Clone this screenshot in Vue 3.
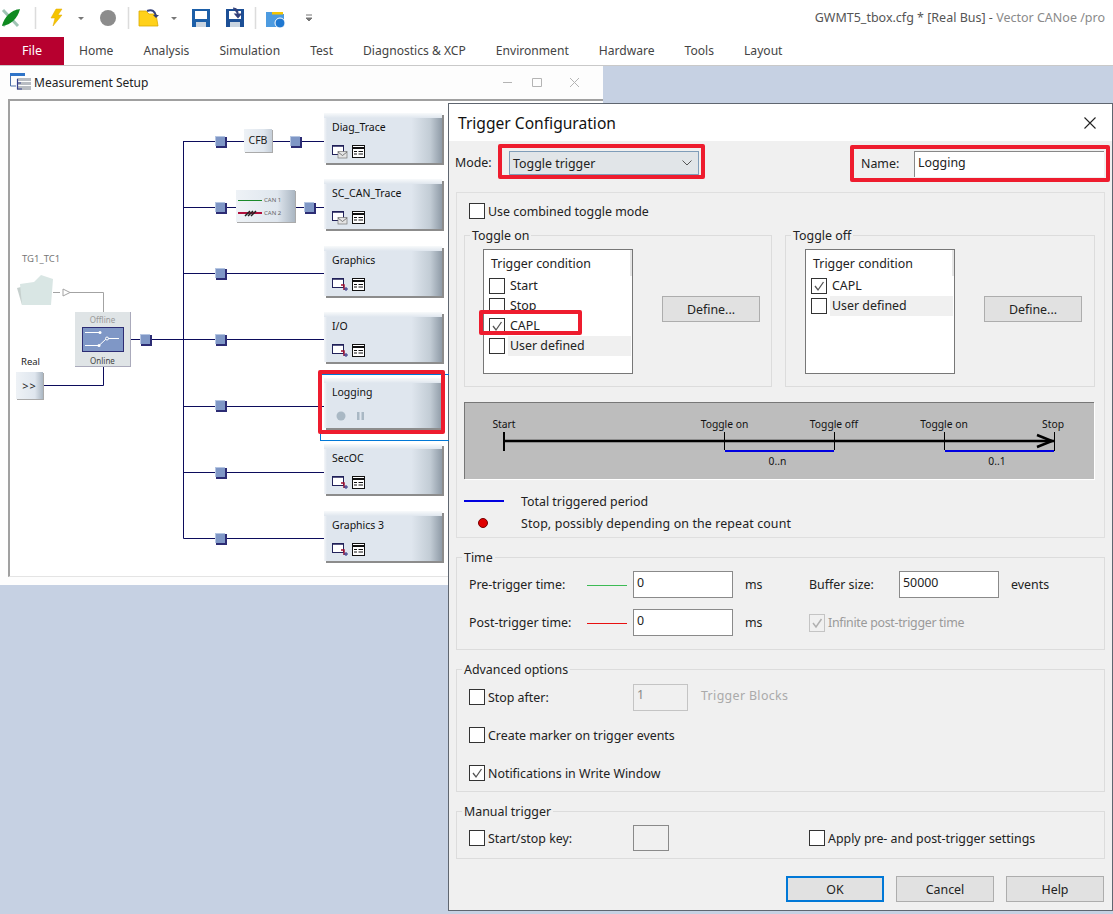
<template>
  <div class="app">
    <!-- quick access toolbar -->
    <div class="qat">
      <svg class="qat-icons" width="330" height="37" viewBox="0 0 330 37">
        <path d="M3 10 L18 26 M18 10 L3 26" stroke="#9fc4b4" stroke-width="3" />
        <path d="M2 26 C4 17 11 10 20 9 C18 18 11 25 2 26Z" fill="#0f8a20" />
        <path d="M35.500 7 V29 M128.500 7 V29 M255.500 7 V29" stroke="#dcdcdc" stroke-width="1.500" />
        <path d="M56 9 L62 9 L58 15 L62 15 L53 26 L55 18 L51 18Z" fill="#f5c400" stroke="#e0a800" stroke-width=".5" />
        <path d="M78 17 H84 L81 20Z M171 17 H177 L174 20Z" fill="#777" />
        <circle cx="108" cy="18" r="8" fill="#8c8c8c" />
        <path d="M139 11 H146 L149 14 H156 L158 26 H139Z" fill="#ffd11a" stroke="#d9a900" stroke-width=".8" />
        <path d="M147 11 C152 9 155 11 156 16" fill="none" stroke="#33407a" stroke-width="2" />
        <path d="M153 15 H159 L156 18Z" fill="#33407a" />
        <path d="M192 9 H210 V27 H192Z" fill="#1c5fa8" />
        <rect x="195" y="11" width="12" height="8" fill="#fff" />
        <rect x="196" y="22" width="10" height="5" fill="#c9d4e0" />
        <path d="M226 9 H244 V27 H226Z" fill="#1c4f96" />
        <rect x="229" y="11" width="12" height="8" fill="#fff" />
        <rect x="230" y="22" width="10" height="5" fill="#c9d4e0" />
        <path d="M233 8 C238 8 238 12 238 15 M235 14 H241 L238 17.500Z" fill="#33407a" stroke="#33407a" stroke-width="1.200" />
        <path d="M266 13 V12 H274 L276 14 H284 V27 H266Z" fill="#4d9be0" />
        <rect x="272" y="12" width="11" height="2.500" fill="#f5c400" />
        <circle cx="280" cy="23" r="5" fill="#1f78d1" stroke="#fff" />
        <path d="M306 15 H312 M306 18 H312 L309 21Z" stroke="#777" fill="#777" />
      </svg>
      <div class="doc-title">GWMT5_tbox.cfg * [Real Bus] - <span>Vector CANoe /pro</span></div>
    </div>

    <!-- ribbon tabs -->
    <div class="ribbon">
      <div class="file-tab">File</div>
      <div class="tabs">
        <span v-for="t in tabs" :key="t">{{ t }}</span>
      </div>
    </div>

    <!-- measurement setup window -->
    <div class="setup">
      <div class="setup-title">
        <svg width="22" height="19" viewBox="0 0 22 19">
          <rect x="0" y="0" width="15" height="3" fill="#2f74c8" />
          <path d="M.5 3 V13 H6" fill="none" stroke="#4a6fa8" />
          <path d="M7 5 H21 V8 H7Z M7 9 H21 V12 H7Z M7 13 H21 V17 H7Z" fill="#b8bcc2" />
          <path d="M7.500 6 V16 H12 M7.500 10 H11" fill="none" stroke="#34408c" stroke-width="1.200" />
        </svg>
        <span>Measurement Setup</span>
        <div class="win-btns">
          <svg width="78" height="14" viewBox="0 0 78 14">
            <path d="M0 7.500 H9 M29.500 3.500 H38.500 V11.500 H29.500Z M67 3 L76 12 M76 3 L67 12" fill="none" stroke="#b4b4b4" />
          </svg>
        </div>
      </div>

      <div class="canvas">
        <svg class="wires" width="593" height="476" viewBox="10 101 593 476">
          <g fill="none" stroke="#0c0c5c">
            <path d="M183.500 141 V538.500" />
            <path v-for="y in rows" :key="y" :d="`M183.500 ${y}.5 H324`" />
            <path d="M131 339.500 H184" />
            <path d="M43 385.500 H103.500 V367" />
          </g>
          <path d="M60 292.500 H53 M70 292.500 H103.500 V312" fill="none" stroke="#a3a3a3" />
          <path d="M63 289 V296 L70 292.500Z" fill="#fff" stroke="#a3a3a3" />
          <path d="M17 288 L33 284 L37 305 L22 305Z" fill="#c6d0ce" />
          <path d="M41 275 L53 279 L51 305 L22 305 L20 284 L34 282Z" fill="#d9e6e4" />
          <g v-for="s in squares" :key="s.x + '-' + s.y">
            <rect :x="s.x + 1" :y="s.y + 1" width="11" height="11" fill="#2c2c74" />
            <rect :x="s.x" :y="s.y" width="10" height="10" fill="#7f97c6" />
            <path :d="`M${s.x} ${s.y}.5 H${s.x + 10} M${s.x}.5 ${s.y} V${s.y + 10}`" stroke="#b6c6e2" />
          </g>
        </svg>

        <div class="tg-label" :style="at(22, 252)">TG1_TC1</div>
        <div class="real-label" :style="at(21, 355)">Real</div>
        <div class="real-box" :style="at(16, 372)">&gt;&gt;</div>

        <div class="switch-box" :style="at(75, 312)">
          <div class="offline">Offline</div>
          <svg width="42" height="25" viewBox="0 0 42 25">
            <rect x=".5" y=".5" width="41" height="24" fill="#7f97c6" stroke="#2c2c74" />
            <path d="M3 5.500 H18 M3 18.500 H17 L24 12 M26 11.500 H37" stroke="#fff" fill="none" />
            <circle cx="18" cy="5.500" r="1.500" fill="#fff" />
            <circle cx="17" cy="18.500" r="1.500" fill="#fff" />
            <circle cx="25" cy="11.500" r="1.500" fill="#7f97c6" stroke="#fff" />
          </svg>
          <div class="online">Online</div>
        </div>

        <div class="cfb" :style="at(244, 129)">CFB</div>
        <div class="can-box" :style="at(236, 190)">
          <svg width="59" height="32" viewBox="0 0 59 32">
            <path d="M2 10.500 H26" stroke="#1a8a2a" />
            <path d="M2 23 H26" stroke="#b0103c" stroke-width="2" />
            <path d="M9 26 L14 21 M12 26 L17 21 M15 26 L20 21" stroke="#222" stroke-width="1.500" />
          </svg>
          <span class="can1">CAN 1</span>
          <span class="can2">CAN 2</span>
        </div>

        <div v-for="n in nodes" :key="n.name" class="node" :style="at(324, n.y)">
          <div class="node-name">{{ n.name }}</div>
          <div class="node-icons">
            <template v-if="n.kind === 'log'">
              <svg width="34" height="12" viewBox="0 0 34 12">
                <circle cx="9" cy="6" r="4.500" fill="#a9b8c4" />
                <path d="M25 2 H27.500 V10 H25Z M29.500 2 H32 V10 H29.500Z" fill="#a9b8c4" />
              </svg>
            </template>
            <template v-else>
              <svg width="36" height="14" viewBox="0 0 36 14">
                <rect x=".5" y=".5" width="11" height="9" fill="#fff" stroke="#22225a" />
                <path d="M0 1 H12" stroke="#22225a" stroke-width="1.500" />
                <template v-if="n.kind === 'trace'">
                  <rect x="6" y="6.500" width="9" height="6.500" fill="#e4e4e4" stroke="#777" stroke-width=".7" />
                  <path d="M6 7 L10.500 10.500 L15 7" fill="none" stroke="#555" stroke-width=".7" />
                </template>
                <template v-else>
                  <path d="M9 7 H12 V12" fill="none" stroke="#a01030" stroke-width="1.500" />
                  <path d="M12 11 H16 M14 9 V13" stroke="#2a2a80" />
                </template>
                <rect x="20.500" y=".5" width="12" height="12" fill="#fff" stroke="#111" />
                <path d="M20 3 H33" stroke="#111" stroke-width="2" />
                <path d="M22 6.500 H25 M26.500 6.500 H31 M22 9 H25 M26.500 9 H31" stroke="#111" />
              </svg>
            </template>
          </div>
        </div>
      </div>
    </div>

    <!-- trigger dialog -->
    <div class="dialog">
      <div class="dlg-title">
        <span>Trigger Configuration</span>
        <svg width="12" height="12" viewBox="0 0 12 12">
          <path d="M.5 .5 L11.500 11.500 M11.500 .5 L.5 11.500" stroke="#222" stroke-width="1.100" />
        </svg>
      </div>

      <div class="mode-row">
        <label class="mode-label">Mode:</label>
        <div class="select">
          <span>Toggle trigger</span>
          <svg width="10" height="6" viewBox="0 0 10 6"><path d="M.5 .5 L5 5 L9.500 .5" fill="none" stroke="#555" /></svg>
        </div>
        <label class="name-label">Name:</label>
        <div class="name-input">Logging</div>
      </div>

      <div class="group main-group">
        <div class="check-row combined">
          <span class="cb"></span><span>Use combined toggle mode</span>
        </div>

        <div class="toggle-row">
          <div class="group toggle-group" v-for="g in toggles" :key="g.title" :class="g.cls">
            <span class="legend">{{ g.title }}</span>
            <div class="cond-list">
              <div class="cond-head">Trigger condition</div>
              <div class="cond-row" v-for="c in g.items" :key="c.label">
                <span class="cb">
                  <svg v-if="c.on" width="14" height="14" viewBox="0 0 14 14"><path d="M3 7 L6 11 L11.500 3" fill="none" stroke="#555" stroke-width="1.300" /></svg>
                </span>
                <span class="cond-text" :class="{ hl: c.hl }">{{ c.label }}</span>
              </div>
            </div>
            <button class="btn define">Define...</button>
          </div>
        </div>

        <div class="timeline">
          <svg width="630" height="77" viewBox="464 402 630 77">
            <path d="M504 441 H1054" stroke="#000" stroke-width="2.500" />
            <path d="M504 432 V451" stroke="#000" stroke-width="2" />
            <path d="M724.500 432 V450 M834.500 432 V450 M944.500 432 V450 M1054.500 432 V451" stroke="#000" />
            <path d="M1037 435 L1052 441 L1037 447" fill="none" stroke="#000" stroke-width="2.500" />
            <path d="M725 451 H834 M945 451 H1054" stroke="#0000e0" stroke-width="2" />
            <g class="tl-text">
              <text x="504" y="428" text-anchor="middle">Start</text>
              <text x="724.500" y="428" text-anchor="middle">Toggle on</text>
              <text x="834" y="428" text-anchor="middle">Toggle off</text>
              <text x="944" y="428" text-anchor="middle">Toggle on</text>
              <text x="1053" y="428" text-anchor="middle">Stop</text>
              <text x="777.500" y="465" text-anchor="middle">0..n</text>
              <text x="997" y="465" text-anchor="middle">0..1</text>
            </g>
          </svg>
        </div>

        <div class="key-grid">
          <span class="key-line"></span><span>Total triggered period</span>
          <span class="key-dot"></span><span class="key-long">Stop, possibly depending on the repeat count</span>
        </div>
      </div>

      <div class="group time-group">
        <span class="legend">Time</span>
        <div class="time-grid">
          <span>Pre-trigger time:</span>
          <span class="tline green"></span>
          <div class="field">0</div>
          <span class="ms">ms</span>
          <span>Buffer size:</span>
          <div class="field">50000</div>
          <span class="ms">events</span>

          <span>Post-trigger time:</span>
          <span class="tline red"></span>
          <div class="field">0</div>
          <span class="ms">ms</span>
          <div class="check-row infinite disabled">
            <span class="cb">
              <svg width="14" height="14" viewBox="0 0 14 14"><path d="M3 7 L6 11 L11.500 3" fill="none" stroke="#b0b0b0" stroke-width="1.500" /></svg>
            </span>
            <span>Infinite post-trigger time</span>
          </div>
        </div>
      </div>

      <div class="group adv-group">
        <span class="legend">Advanced options</span>
        <div class="adv-row">
          <div class="check-row stop-after"><span class="cb"></span><span>Stop after:</span></div>
          <div class="field small off">1</div>
          <span class="muted">Trigger Blocks</span>
        </div>
        <div class="adv-row">
          <div class="check-row"><span class="cb"></span><span>Create marker on trigger events</span></div>
        </div>
        <div class="adv-row">
          <div class="check-row">
            <span class="cb">
              <svg width="14" height="14" viewBox="0 0 14 14"><path d="M3 7 L6 11 L11.500 3" fill="none" stroke="#555" stroke-width="1.300" /></svg>
            </span>
            <span>Notifications in Write Window</span>
          </div>
        </div>
      </div>

      <div class="group manual-group">
        <span class="legend">Manual trigger</span>
        <div class="adv-row manual-row">
          <div class="check-row stop-after"><span class="cb"></span><span>Start/stop key:</span></div>
          <div class="key-field"></div>
          <div class="check-row apply"><span class="cb"></span><span>Apply pre- and post-trigger settings</span></div>
        </div>
      </div>

      <div class="dlg-buttons">
        <button class="btn primary">OK</button>
        <button class="btn">Cancel</button>
        <button class="btn">Help</button>
      </div>
    </div>

    <!-- red annotations drawn on top of the screenshot -->
    <div class="blue-sel"></div>
    <div v-for="(m, i) in marks" :key="i" class="mark" :style="m"></div>
  </div>
</template>

<script setup>
const tabs = ['Home', 'Analysis', 'Simulation', 'Test', 'Diagnostics & XCP', 'Environment', 'Hardware', 'Tools', 'Layout']

const rows = [141, 207, 273, 339, 406, 472, 538]

const squares = [
  { x: 215, y: 136 }, { x: 290, y: 136 },
  { x: 215, y: 202 }, { x: 304, y: 202 },
  { x: 215, y: 268 }, { x: 215, y: 334 },
  { x: 140, y: 334 }, { x: 215, y: 400 },
  { x: 215, y: 467 }, { x: 215, y: 533 },
]

const nodes = [
  { name: 'Diag_Trace', y: 113, kind: 'trace' },
  { name: 'SC_CAN_Trace', y: 179, kind: 'trace' },
  { name: 'Graphics', y: 246, kind: 'graph' },
  { name: 'I/O', y: 312, kind: 'graph' },
  { name: 'Logging', y: 378, kind: 'log' },
  { name: 'SecOC', y: 444, kind: 'graph' },
  { name: 'Graphics 3', y: 511, kind: 'graph' },
]

const toggles = [
  {
    title: 'Toggle on',
    cls: 'on',
    items: [
      { label: 'Start' },
      { label: 'Stop' },
      { label: 'CAPL', on: true },
      { label: 'User defined', hl: true },
    ],
  },
  {
    title: 'Toggle off',
    cls: 'off',
    items: [
      { label: 'CAPL', on: true },
      { label: 'User defined', hl: true },
    ],
  },
]

const box = (x, y, w, h) => ({ left: x + 'px', top: y + 'px', width: w + 'px', height: h + 'px' })

const marks = [
  box(318, 370, 127, 64),
  box(498, 144, 207, 35),
  box(850, 145, 260, 37),
  box(479, 310, 103, 25),
]

// canvas origin sits at 10,101 on the page
const at = (x, y) => ({ left: x - 10 + 'px', top: y - 101 + 'px' })
</script>

<style>
html, body { margin: 0; background: #c6d1e3; }
</style>

<style scoped>
.app {
  position: relative;
  width: 1113px;
  height: 914px;
  overflow: hidden;
  background: #c6d1e3;
  font-family: "Noto Sans", sans-serif;
  font-size: 12.400px;
  color: #222;
}

.qat {
  position: relative;
  height: 37px;
  background: #fff;
}
.qat-icons { display: block; }
.doc-title {
  position: absolute;
  right: 8px;
  top: 9px;
  font-size: 12.500px;
  color: #555;
}
.doc-title span { color: #8a8a8a; }

.ribbon {
  display: flex;
  height: 28px;
  background: #fff;
  border-bottom: 1px solid #c9c9c9;
}
.file-tab {
  width: 64px;
  background: #b7002f;
  color: #fff;
  text-align: center;
  line-height: 28px;
  font-size: 12.500px;
}
.tabs {
  display: flex;
  gap: 30px;
  padding-left: 15px;
  line-height: 28px;
  font-size: 12.100px;
  color: #444;
}

.setup {
  position: absolute;
  left: 0;
  top: 66px;
  width: 603px;
  height: 519px;
  background: #fdfdfd;
}
.setup-title {
  position: relative;
  display: flex;
  align-items: center;
  gap: 2px;
  height: 33px;
  box-sizing: border-box;
  padding: 0 0 1px 10px;
  font-size: 12px;
  color: #222;
}
.win-btns {
  position: absolute;
  left: 503px;
  top: 9px;
  line-height: 0;
}
.canvas {
  position: relative;
  margin-left: 8px;
  width: 595px;
  height: 478px;
  box-sizing: border-box;
  border-left: 2px solid #a0a0a0;
  border-top: 2px solid #a0a0a0;
  border-bottom: 1px solid #e4e4e4;
  background: #fff;
  font-size: 10.500px;
}
.wires { position: absolute; left: 0; top: 0; }

.tg-label { position: absolute; color: #777; font-size: 9.500px; }
.real-label { position: absolute; color: #222; font-size: 9.500px; }
.real-box {
  position: absolute;
  width: 27px;
  height: 27px;
  box-sizing: border-box;
  text-align: center;
  line-height: 27px;
  font-size: 11px;
  letter-spacing: 1px;
  background: linear-gradient(90deg, #eef2f6, #dfe6ee 70%, #aab6c2);
  box-shadow: 1px 1px 0 #aaa;
}
.switch-box {
  position: absolute;
  width: 56px;
  height: 55px;
  box-sizing: border-box;
  background: #dfe4e6;
  border-right: 1px solid #aab;
  border-bottom: 1px solid #aab;
  text-align: center;
  font-size: 8px;
  line-height: 15px;
}
.switch-box svg { display: block; margin: 0 auto; }
.offline { color: #999; }
.online { color: #444; line-height: 17px; }

.cfb {
  position: absolute;
  width: 28px;
  height: 23px;
  box-sizing: border-box;
  text-align: center;
  line-height: 23px;
  font-size: 10.500px;
  background: linear-gradient(90deg, #eef2f6, #dfe6ee 70%, #c5ced8);
  box-shadow: 1px 1px 0 #aaa;
}
.can-box {
  position: absolute;
  width: 59px;
  height: 32px;
  background: linear-gradient(90deg, #eef2f6, #dfe6ee 70%, #aab6c2);
  box-shadow: 1px 1px 0 #aaa;
}
.can-box svg { display: block; }
.can1, .can2 { position: absolute; left: 28px; font-size: 6px; line-height: 8px; color: #666; }
.can1 { top: 6px; }
.can2 { top: 19px; }

.node {
  position: absolute;
  width: 118px;
  height: 50px;
  box-sizing: border-box;
  padding: 7px 0 0 8px;
  background:
    linear-gradient(180deg, #f8fafb 0, #dfe6ee 5px) left top / 100% 5px no-repeat,
    linear-gradient(90deg, #f4f6f9 0, #dfe6ee 3px, #dfe6ee 74%, #c2ccd5 90%, #8f9ba7 100%);
  box-shadow: 2px 2px 0 #8c8c8c;
}
.node-name { font-size: 10.500px; line-height: 14px; color: #111; white-space: nowrap; }
.node-icons { margin-top: 11px; line-height: 0; }

.dialog {
  position: absolute;
  left: 448px;
  top: 103px;
  width: 665px;
  height: 808px;
  box-sizing: border-box;
  border: 1px solid #5f6670;
  background: #f0f0f0;
  display: flex;
  flex-direction: column;
}
.dlg-title {
  display: flex;
  align-items: center;
  justify-content: space-between;
  height: 37px;
  padding: 0 16px 0 9px;
  box-sizing: border-box;
  background: #fff;
  font-size: 15.600px;
  color: #111;
}
.mode-row {
  display: flex;
  flex: none;
  height: 51px;
  padding: 10px 0 0 6px;
  box-sizing: border-box;
}
.mode-label { width: 54px; line-height: 24px; }
.select {
  display: flex;
  align-items: center;
  justify-content: space-between;
  width: 190px;
  height: 24px;
  box-sizing: border-box;
  padding: 0 6px 0 3px;
  background: #e1e5e8;
  border: 1px solid #7f9db9;
}
.name-label { margin-left: 162px; width: 53px; line-height: 26px; }
.name-input {
  width: 190px;
  height: 26px;
  box-sizing: border-box;
  padding-left: 3px;
  line-height: 21px;
  background: #fff;
  border-left: 1px solid #888;
  border-top: 1px solid #888;
}

.group {
  position: relative;
  box-sizing: border-box;
  border: 1px solid #dcdcdc;
}
.legend {
  position: absolute;
  left: 5px;
  top: -9px;
  padding: 0 2px;
  line-height: 18px;
  background: #f0f0f0;
}
.main-group {
  margin: 0 7px 0 7px;
  width: 649px;
  height: 346px;
  padding: 10px 0 0 7px;
  border-color: #dfdfdf;
}
.check-row {
  display: flex;
  align-items: center;
  gap: 3px;
  white-space: nowrap;
}
.combined { margin-left: 5px; height: 16px; }
.cb {
  display: flex;
  flex: none;
  align-items: center;
  justify-content: center;
  width: 16px;
  height: 16px;
  box-sizing: border-box;
  border: 1px solid #333;
  background: #fff;
}
.toggle-row {
  display: flex;
  gap: 13px;
  margin-top: 16px;
}
.toggle-group {
  display: flex;
  align-items: flex-start;
  height: 152px;
  width: 308px;
  padding: 13px 0 0 18px;
}
.toggle-group.off { width: 310px; padding-left: 19px; }
.cond-list {
  width: 150px;
  height: 125px;
  box-sizing: border-box;
  border: 1px solid #777;
  background: #fff;
  overflow: hidden;
}
.cond-head {
  height: 26px;
  line-height: 27px;
  padding-left: 7px;
  border-right: 2px solid #e6e6e6;
}
.cond-row {
  display: flex;
  align-items: center;
  height: 20px;
  padding-left: 5px;
}
.cond-text {
  flex: 1;
  height: 20px;
  line-height: 20px;
  margin-left: 3px;
  margin-right: 1px;
  padding-left: 2px;
}
.cond-text.hl { background: #f0f0f0; }
.btn {
  width: 98px;
  height: 26px;
  padding: 0;
  font: inherit;
  color: #222;
  background: #e1e1e1;
  border: 1px solid #adadad;
}
.define { margin: 47px 0 0 29px; }
.timeline {
  width: 630px;
  height: 77px;
  margin-top: 15px;
  background: #bdbdbd;
  box-shadow: inset 1px 1px 0 #777, 1px 1px 0 #fff;
}
.timeline svg { display: block; }
.tl-text text {
  font-size: 10.300px;
  fill: #111;
  font-family: "Noto Sans", sans-serif;
}
.key-grid {
  display: grid;
  grid-template-columns: 40px auto;
  column-gap: 17px;
  grid-auto-rows: 22px;
  align-items: center;
  margin-top: 11px;
}
.key-long { letter-spacing: .12px; }
.key-line { height: 2px; background: #0000e0; }
.key-dot {
  justify-self: center;
  margin-left: -2px;
  width: 8px;
  height: 8px;
  border-radius: 50%;
  background: #e00000;
  border: 1px solid #700;
}

.time-group, .adv-group, .manual-group {
  margin: 19px 7px 0 7px;
  width: 649px;
}
.time-group { height: 93px; padding: 13px 0 0 12px; }
.time-grid {
  display: grid;
  grid-template-columns: 118px 46px 100px 76px 90px 100px auto;
  grid-auto-rows: 27px;
  row-gap: 11px;
  align-items: center;
}
.tline { width: 40px; height: 1px; margin-top: 1px; }
.tline.green { background: #3cba54; }
.tline.red { background: #e81010; }
.field {
  height: 27px;
  box-sizing: border-box;
  padding-left: 3px;
  line-height: 22px;
  background: #fff;
  border: 1px solid #8a8a8a;
}
.ms { padding-left: 12px; }
.infinite { grid-column: 5 / 8; letter-spacing: -.3px; }
.disabled { color: #9a9a9a; }
.disabled .cb { border-color: #c4c4c4; background: #f0f0f0; height: 18px; }

.adv-group {
  height: 123px;
  padding: 13px 0 0 12px;
}
.adv-row {
  display: flex;
  align-items: center;
  height: 28px;
  margin-bottom: 10px;
}
.stop-after { width: 164px; }
.field.small { width: 55px; line-height: 20px; }
.field.off {
  background: #f0f0f0;
  color: #888;
  border-color: #c4c4c4;
}
.muted { margin: 0 0 3px 13px; color: #aaa; letter-spacing: .35px; }

.manual-group {
  height: 48px;
  padding: 13px 0 0 12px;
}
.manual-row { height: 26px; margin: 0; }
.key-field {
  width: 36px;
  height: 26px;
  box-sizing: border-box;
  background: #f0f0f0;
  border: 1px solid #8a8a8a;
}
.apply { margin-left: 140px; }

.dlg-buttons {
  display: flex;
  justify-content: flex-end;
  gap: 12px;
  margin-top: 17px;
  padding-right: 8px;
}
.primary { border: 2px solid #0078d7; }

.blue-sel {
  position: absolute;
  left: 320px;
  top: 374px;
  width: 128px;
  height: 65px;
  border: 1px solid #0078d7;
  border-right: 0;
}
.mark {
  position: absolute;
  box-sizing: border-box;
  border: 4px solid #ee1c2e;
  border-radius: 2px;
}
</style>
